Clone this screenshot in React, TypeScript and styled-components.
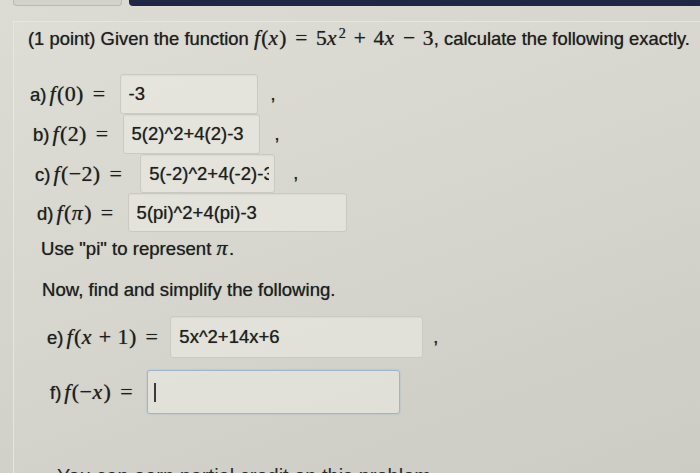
import React from 'react'
import styled, { createGlobalStyle } from 'styled-components'

const GlobalStyle = createGlobalStyle`
  html, body {
    margin: 0;
    padding: 0;
  }

  body {
    width: 700px;
    height: 473px;
    overflow: hidden;
    background: linear-gradient(160deg, #dcdcd5 0%, #d4d4cc 50%, #c9c9c1 100%);
    font-family: "Liberation Sans", Arial, sans-serif;
    color: #1f1f1f;
  }
`

type Answer = {
  key: string
  indent: number
  label: React.ReactNode
  value: string
  width: number
  height: number
  gap: number
  space?: number
  comma?: number
  focused?: boolean
}

// 行ごとのデータ (写真の遠近で少しずつ右にずれる)
function buildAnswers(): { first: Answer[]; second: Answer[] } {
  const x = <Var>x</Var>
  const f = <Var>f</Var>

  const first: Answer[] = [
    { key: 'a', indent: 2, label: <>{f}(0)</>, value: '-3', width: 138, height: 40, gap: 0, comma: 13 },
    { key: 'b', indent: 5, label: <>{f}(2)</>, value: '5(2)^2+4(2)-3', width: 137, height: 40, gap: 0, comma: 15 },
    { key: 'c', indent: 7, label: <>{f}(−2)</>, value: '5(-2)^2+4(-2)-3', width: 135, height: 39, gap: 0, space: 15, comma: 14 },
    { key: 'd', indent: 9, label: <>{f}(<Var>π</Var>)</>, value: '5(pi)^2+4(pi)-3', width: 219, height: 39, gap: 0 },
  ]

  const second: Answer[] = [
    { key: 'e', indent: 19, label: <>{f}({x} + 1)</>, value: '5x^2+14x+6', width: 253, height: 42, gap: 15, space: 9, comma: 12 },
    { key: 'f', indent: 22, label: <>{f}(−{x})</>, value: '', width: 253, height: 44, gap: 12, focused: true },
  ]

  return { first, second }
}

function AnswerLine({ item }: { item: Answer }) {
  return (
    <AnswerRow $indent={item.indent} $gap={item.gap} $space={item.space ?? 11}>
      <Label>
        <Letter>{item.key})</Letter>
        <MathText>
          {item.label} <Equals>=</Equals>
        </MathText>
      </Label>
      <Field $width={item.width} $height={item.height} $focused={item.focused}>
        {item.focused ? <Caret /> : <FieldValue>{item.value}</FieldValue>}
      </Field>
      {item.comma !== undefined && <Comma $offset={item.comma - 11}>,</Comma>}
    </AnswerRow>
  )
}

function App(): JSX.Element {
  const { first, second } = buildAnswers()

  return (
    <>
      <GlobalStyle />
      <Screen>
        <TopStrip>
          <TabButton />
          <NavBar />
        </TopStrip>

        <Panel>
          <Heading>
            (1 point) Given the function{' '}
            <HeadingMath>
              <Var>f</Var>(<Var>x</Var>) <Equals>=</Equals> 5<Var>x</Var>
              <Sup>2</Sup> <Op>+</Op> 4<Var>x</Var> <Op>−</Op> 3
            </HeadingMath>
            , calculate the following exactly.
          </Heading>

          <Rows>
            {first.map((item) => (
              <AnswerLine key={item.key} item={item} />
            ))}
          </Rows>

          <Note $indent={13} $top={5}>
            Use "pi" to represent <MathText><Var>π</Var></MathText>.
          </Note>
          <Note $indent={14} $top={19}>
            Now, find and simplify the following.
          </Note>

          {second.map((item) => (
            <AnswerLine key={item.key} item={item} />
          ))}

          <Footer>You can earn partial credit on this problem.</Footer>
        </Panel>
      </Screen>
    </>
  )
}

const Screen = styled.div`
  width: 700px;
  height: 473px;
  overflow: hidden;
`

const TopStrip = styled.div`
  display: flex;
  height: 6px;
  gap: 7px;
  padding-left: 13px;
`

const TabButton = styled.div`
  width: 107px;
  background: #d3d3cc;
  border: 1px solid #b9b9b1;
  border-top: none;
  border-radius: 0 0 4px 4px;
`

const NavBar = styled.div`
  flex: 1;
  background: #1f2744;
  border-radius: 0 0 0 4px;
`

const Panel = styled.div`
  margin: 15px 0 0 13px;
  padding: 5px 0 0 14px;
  border-top: 1px solid #e6e6df;
  border-left: 1px solid #e6e6df;
  background: rgba(255, 255, 255, 0.06);
  height: 460px;
`

const Heading = styled.div`
  font-size: 18.4px;
  line-height: 22px;
  white-space: nowrap;
  text-shadow: 0 0 0.8px rgba(0, 0, 0, 0.6);
`

const MathText = styled.span`
  font-family: "Liberation Serif", "Times New Roman", serif;
  font-size: 22px;
  letter-spacing: 0.4px;
  white-space: nowrap;
`

const HeadingMath = styled(MathText)`
  font-size: 21.5px;
  letter-spacing: 0.2px;
`

const Var = styled.i`
  font-style: italic;
  padding-right: 1px;
`

const Equals = styled.span`
  padding: 0 3px;
`

const Op = styled.span`
  padding: 0 2px;
`

const Sup = styled.sup`
  font-size: 0.66em;
  line-height: 0;
  vertical-align: 0.5em;
  margin-left: 1px;
`

const Rows = styled.div`
  display: flex;
  flex-direction: column;
  margin-top: 24px;
`

const AnswerRow = styled.div<{ $indent: number; $gap: number; $space: number }>`
  display: flex;
  align-items: center;
  gap: ${(p) => p.$space}px;
  margin-top: ${(p) => p.$gap}px;
  padding-left: ${(p) => p.$indent}px;
  text-shadow: 0 0 0.8px rgba(0, 0, 0, 0.6);
`

const Label = styled.div`
  display: flex;
  align-items: baseline;
  gap: 3px;
  white-space: nowrap;
`

const Letter = styled.span`
  font-size: 18.5px;
`

const Field = styled.div<{ $width: number; $height: number; $focused?: boolean }>`
  display: flex;
  align-items: center;
  box-sizing: border-box;
  width: ${(p) => p.$width}px;
  height: ${(p) => p.$height}px;
  padding: 0 5px 0 8px;
  background: rgba(236, 236, 230, 0.55);
  border: 1px solid ${(p) => (p.$focused ? '#9cb6cc' : '#cacac2')};
  border-radius: 3px;
  box-shadow: ${(p) =>
    p.$focused
      ? '0 0 2px rgba(110, 150, 190, 0.45)'
      : 'inset 0 1px 1px rgba(0, 0, 0, 0.04)'};
`

const FieldValue = styled.span`
  flex: 1;
  min-width: 0;
  overflow: hidden;
  white-space: nowrap;
  font-size: 18.5px;
`

const Caret = styled.span`
  width: 1.5px;
  height: 19px;
  margin-left: -2px;
  background: #3a3a3a;
`

const Comma = styled.span<{ $offset: number }>`
  margin-left: ${(p) => p.$offset}px;
  font-size: 18px;
`

const Note = styled.div<{ $indent: number; $top: number }>`
  margin-top: ${(p) => p.$top}px;
  padding-left: ${(p) => p.$indent}px;
  font-size: 18.6px;
  line-height: 22px;
  text-shadow: 0 0 0.8px rgba(0, 0, 0, 0.6);
`

const Footer = styled.div`
  margin-top: 51px;
  padding-left: 29px;
  font-size: 20px;
  line-height: 22px;
  color: #2a2a2a;
`

export default App
